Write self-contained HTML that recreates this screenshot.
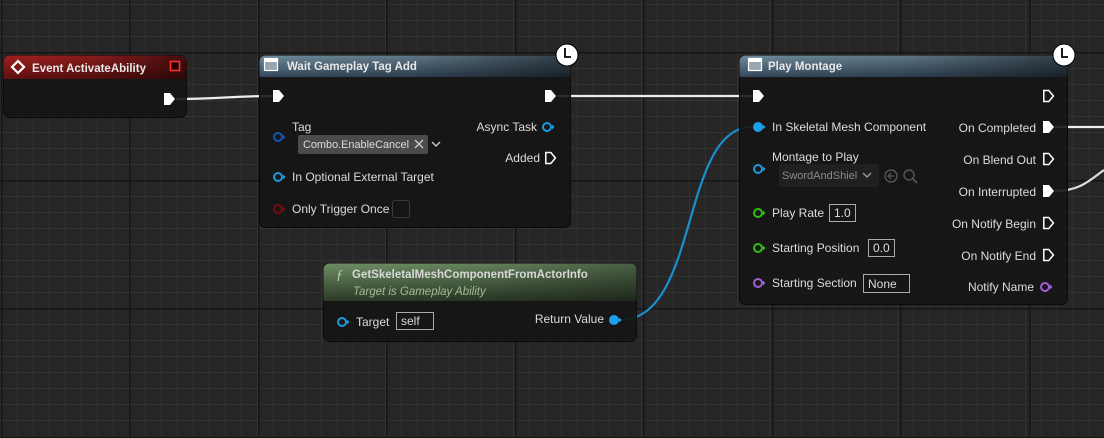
<!DOCTYPE html>
<html><head><meta charset="utf-8"><style>
html,body{margin:0;padding:0;width:1104px;height:438px;overflow:hidden;background:#262626}
svg{display:block;position:absolute;left:0;top:0}
text{font-family:"Liberation Sans",sans-serif;font-size:12px;fill:#dcdcdc}
.b{font-weight:bold;fill:#e8e8e8}
</style></head><body>
<svg width="1104" height="438" viewBox="0 0 1104 438" xmlns="http://www.w3.org/2000/svg">
<defs>
<linearGradient id="blue" x1="0" y1="0" x2="0" y2="1"><stop offset="0" stop-color="#6f8b9d"/><stop offset="1" stop-color="#34475a"/></linearGradient>
<linearGradient id="dk" x1="0" y1="0" x2="1" y2="0"><stop offset="0" stop-color="#000" stop-opacity="0"/><stop offset="0.5" stop-color="#000" stop-opacity="0.15"/><stop offset="1" stop-color="#000" stop-opacity="0.55"/></linearGradient>
<linearGradient id="red" x1="0" y1="0" x2="0" y2="1"><stop offset="0" stop-color="#a02020"/><stop offset="1" stop-color="#5e1010"/></linearGradient>
<linearGradient id="green" x1="0" y1="0" x2="0" y2="1"><stop offset="0" stop-color="#6e8e64"/><stop offset="1" stop-color="#2c3a28"/></linearGradient>
<g id="exf"><path d="M0,-6 h6 l5,6 l-5,6 h-6 z" fill="#fff"/></g>
<g id="exo"><path d="M0.8,-5.5 h5 l4.6,5.5 l-4.6,5.5 h-5 z" fill="none" stroke="#fff" stroke-width="1.5"/></g>
</defs>
<rect width="1104" height="438" fill="#262626"/>
<line x1="1" y1="219" x2="1104" y2="219" stroke="#323232" stroke-width="438" stroke-dasharray="1 15"/>
<line x1="552" y1="4" x2="552" y2="438" stroke="#323232" stroke-width="1104" stroke-dasharray="1 15"/>
<g fill="#161616">
<rect x="0" y="52" width="1104" height="1.5"/><rect x="0" y="180" width="1104" height="1.5"/><rect x="0" y="308" width="1104" height="1.5"/><rect x="0" y="436.5" width="1104" height="1.5"/>
<rect x="1" y="0" width="1.5" height="438"/><rect x="129" y="0" width="1.5" height="438"/><rect x="258" y="0" width="1.5" height="438"/><rect x="386" y="0" width="1.5" height="438"/><rect x="515" y="0" width="1.5" height="438"/><rect x="643" y="0" width="1.5" height="438"/><rect x="772" y="0" width="1.5" height="438"/><rect x="900" y="0" width="1.5" height="438"/><rect x="1029" y="0" width="1.5" height="438"/>
</g>

<g fill="none" stroke-width="2.2">
<path d="M176,99 C220,99 230,96 272,96" stroke="#eee"/>
<path d="M557,96 L752,96" stroke="#eee"/>
<path d="M620,320 C700,320 680,127 752,127" stroke="#1a8fd0"/>
<path d="M1055,127 L1104,127" stroke="#eee"/>
<path d="M1055,191 C1080,191 1090,180 1104,170" stroke="#ddd"/>
</g>

<g>
<rect x="3.5" y="55.5" width="183" height="62" rx="6" fill="#141514" fill-opacity="0.9" stroke="#0a0a0a"/>
<path d="M3.5,79 V61.5 a6,6 0 0 1 6,-6 H180.5 a6,6 0 0 1 6,6 V79 Z" fill="url(#red)"/>
<path d="M3.5,79 V61.5 a6,6 0 0 1 6,-6 H180.5 a6,6 0 0 1 6,6 V79 Z" fill="url(#dk)"/>
<path d="M18,61 l6,6 l-6,6 l-6,-6 z" fill="none" stroke="#fff" stroke-width="2.2"/>
<text x="32" y="72" class="b" style="font-size:11.5px">Event ActivateAbility</text>
<rect x="170.5" y="61.5" width="9" height="9" fill="#200" stroke="#ff3030" stroke-width="1.6"/>
<use href="#exf" x="164" y="99"/>
</g>

<g>
<rect x="259.5" y="55.5" width="311" height="172" rx="6" fill="#141514" fill-opacity="0.9" stroke="#0a0a0a"/>
<path d="M259.5,77 V61.5 a6,6 0 0 1 6,-6 H564.5 a6,6 0 0 1 6,6 V77 Z" fill="url(#blue)"/>
<path d="M259.5,77 V61.5 a6,6 0 0 1 6,-6 H564.5 a6,6 0 0 1 6,6 V77 Z" fill="url(#dk)"/>
<rect x="264.5" y="58.5" width="13" height="12" fill="#9aa6ae" stroke="#fff" stroke-width="1.2"/><rect x="265" y="59" width="12" height="3" fill="#fff"/>
<text x="287" y="70" class="b" style="font-size:11.5px">Wait Gameplay Tag Add</text>
<circle cx="567" cy="55" r="11" fill="#fff" stroke="#000"/><path d="M565,48 V57 H571" fill="none" stroke="#000" stroke-width="1.8"/>
<use href="#exf" x="273" y="96"/>
<use href="#exf" x="545" y="96"/>
<circle cx="278" cy="137" r="4" fill="none" stroke="#0a5ab8" stroke-width="2"/><path d="M283,134.5 l2.5,2.5 l-2.5,2.5z" fill="#0a5ab8"/>
<text x="292" y="131">Tag</text>
<rect x="298" y="135" width="130" height="19" rx="2" fill="#4b4b4b"/>
<text x="303" y="148" style="font-size:11px" textLength="106" lengthAdjust="spacingAndGlyphs">Combo.EnableCancel</text>
<path d="M415,140 l8,8 M423,140 l-8,8" stroke="#ccc" stroke-width="1.4"/>
<path d="M432,142 l4,4 l4,-4" stroke="#ccc" stroke-width="1.4" fill="none"/>
<text x="537" y="131" text-anchor="end">Async Task</text>
<circle cx="547" cy="127" r="4" fill="none" stroke="#1a9ae0" stroke-width="2"/><path d="M552,124.5 l2.5,2.5 l-2.5,2.5z" fill="#1a9ae0"/>
<text x="540" y="162" text-anchor="end">Added</text>
<use href="#exo" x="545" y="158"/>
<circle cx="278" cy="177" r="4" fill="none" stroke="#1a9ae0" stroke-width="2"/><path d="M283,174.5 l2.5,2.5 l-2.5,2.5z" fill="#1a9ae0"/>
<text x="292" y="181">In Optional External Target</text>
<circle cx="278" cy="209" r="4" fill="none" stroke="#7a0a0a" stroke-width="2"/><path d="M283,206.5 l2.5,2.5 l-2.5,2.5z" fill="#7a0a0a"/>
<text x="292" y="213">Only Trigger Once</text>
<rect x="392.5" y="200.5" width="17" height="17" rx="2" fill="#151515" stroke="#3a3a3a"/>
</g>

<g>
<rect x="739.5" y="55.5" width="328" height="249" rx="6" fill="#141514" fill-opacity="0.9" stroke="#0a0a0a"/>
<path d="M739.5,77 V61.5 a6,6 0 0 1 6,-6 H1061.5 a6,6 0 0 1 6,6 V77 Z" fill="url(#blue)"/>
<path d="M739.5,77 V61.5 a6,6 0 0 1 6,-6 H1061.5 a6,6 0 0 1 6,6 V77 Z" fill="url(#dk)"/>
<rect x="748.5" y="58.5" width="13" height="12" fill="#9aa6ae" stroke="#fff" stroke-width="1.2"/><rect x="749" y="59" width="12" height="3" fill="#fff"/>
<text x="768" y="70" class="b" style="font-size:11.5px">Play Montage</text>
<circle cx="1064" cy="55" r="11" fill="#fff" stroke="#000"/><path d="M1062,48 V57 H1068" fill="none" stroke="#000" stroke-width="1.8"/>
<use href="#exf" x="753" y="96"/>
<use href="#exo" x="1043" y="96"/>
<circle cx="758" cy="127" r="5" fill="#1aa0f0"/><path d="M763,124.5 l2.5,2.5 l-2.5,2.5z" fill="#1aa0f0"/>
<text x="772" y="131">In Skeletal Mesh Component</text>
<circle cx="758" cy="169" r="4" fill="none" stroke="#1a9ae0" stroke-width="2"/><path d="M763,166.5 l2.5,2.5 l-2.5,2.5z" fill="#1a9ae0"/>
<text x="772" y="161">Montage to Play</text>
<rect x="779" y="164" width="100" height="23" rx="2" fill="#202020"/>
<text x="782" y="179" style="font-size:11px;fill:#8a8a8a">SwordAndShiel</text>
<path d="M863,173 l4,4 l4,-4" stroke="#999" stroke-width="1.4" fill="none"/>
<circle cx="891" cy="176" r="6" fill="none" stroke="#555" stroke-width="1.4"/><path d="M894,176 h-6 l3,-3 M888,176 l3,3" stroke="#555" stroke-width="1.2" fill="none"/>
<circle cx="909" cy="175" r="5" fill="none" stroke="#555" stroke-width="1.4"/><path d="M913,179 l4,4" stroke="#555" stroke-width="1.6"/>
<circle cx="758" cy="213" r="4" fill="none" stroke="#30c010" stroke-width="2"/><path d="M763,210.5 l2.5,2.5 l-2.5,2.5z" fill="#30c010"/>
<text x="772" y="217">Play Rate</text>
<rect x="829.5" y="204.5" width="26" height="17" fill="none" stroke="#aaa"/><text x="834" y="217">1.0</text>
<circle cx="758" cy="248" r="4" fill="none" stroke="#30c010" stroke-width="2"/><path d="M763,245.5 l2.5,2.5 l-2.5,2.5z" fill="#30c010"/>
<text x="772" y="252">Starting Position</text>
<rect x="868.5" y="239.5" width="26" height="17" fill="none" stroke="#aaa"/><text x="873" y="252">0.0</text>
<circle cx="758" cy="283" r="4" fill="none" stroke="#a060d8" stroke-width="2"/><path d="M763,280.5 l2.5,2.5 l-2.5,2.5z" fill="#a060d8"/>
<text x="772" y="287">Starting Section</text>
<rect x="863.5" y="274.5" width="46" height="18" fill="none" stroke="#aaa"/><text x="868" y="288">None</text>
<g text-anchor="end">
<text x="1036" y="132">On Completed</text>
<text x="1036" y="164">On Blend Out</text>
<text x="1036" y="196">On Interrupted</text>
<text x="1036" y="228">On Notify Begin</text>
<text x="1036" y="260">On Notify End</text>
<text x="1034" y="291">Notify Name</text>
</g>
<use href="#exf" x="1043" y="127"/>
<use href="#exo" x="1043" y="159"/>
<use href="#exf" x="1043" y="191"/>
<use href="#exo" x="1043" y="223"/>
<use href="#exo" x="1043" y="255"/>
<circle cx="1045" cy="287" r="4" fill="none" stroke="#a060d8" stroke-width="2"/><path d="M1050,284.5 l2.5,2.5 l-2.5,2.5z" fill="#a060d8"/>
</g>

<g>
<rect x="323.5" y="263.5" width="313" height="78" rx="6" fill="#141514" fill-opacity="0.9" stroke="#0a0a0a"/>
<path d="M323.5,301 V269.5 a6,6 0 0 1 6,-6 H630.5 a6,6 0 0 1 6,6 V301 Z" fill="url(#green)"/>
<path d="M323.5,301 V269.5 a6,6 0 0 1 6,-6 H630.5 a6,6 0 0 1 6,6 V301 Z" fill="url(#dk)" opacity="0.6"/>
<text x="336" y="279" style="font-family:'Liberation Serif',serif;font-style:italic;font-size:14px;fill:#b8d8a0">ƒ</text>
<text x="352" y="278" class="b" style="fill:#d8d8d8;font-size:11.5px">GetSkeletalMeshComponentFromActorInfo</text>
<text x="353" y="295" style="font-style:italic;fill:#a8b890;font-size:11.5px">Target is Gameplay Ability</text>
<circle cx="342" cy="322" r="4" fill="none" stroke="#1a9ae0" stroke-width="2"/><path d="M347,319.5 l2.5,2.5 l-2.5,2.5z" fill="#1a9ae0"/>
<text x="356" y="326">Target</text>
<rect x="396.5" y="312.5" width="37" height="17" fill="none" stroke="#aaa"/><text x="401" y="325">self</text>
<text x="604" y="323" text-anchor="end">Return Value</text>
<circle cx="614" cy="320" r="5" fill="#1aa0f0"/><path d="M619,317.5 l2.5,2.5 l-2.5,2.5z" fill="#1aa0f0"/>
</g>
</svg>
</body></html>
